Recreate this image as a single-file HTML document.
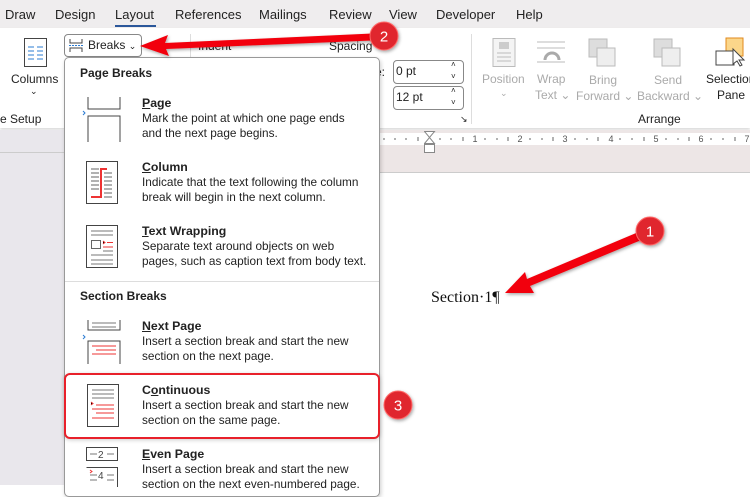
<!DOCTYPE html>
<html><head><meta charset="utf-8"><style>
*{margin:0;padding:0;box-sizing:border-box}
body{width:750px;height:485px;overflow:hidden;position:relative;font-family:"Liberation Sans",sans-serif;background:#fff;color:#222}
.a{position:absolute;white-space:nowrap}
.tab{font-size:13px;top:7px}
.r{font-size:12px}
.g{color:#aaa}
.m{font-size:11.8px;line-height:15px}
.t{font-weight:bold;font-size:12px}
</style></head><body>
<div class="a" style="left:0;top:0;width:750px;height:28px;background:#efedee"></div>
<div class="a tab" style="left:5px">Draw</div>
<div class="a tab" style="left:55px">Design</div>
<div class="a tab" style="left:115px">Layout</div>
<div class="a" style="left:115px;top:25px;width:41px;height:2px;background:#2b579a"></div>
<div class="a tab" style="left:175px">References</div>
<div class="a tab" style="left:259px">Mailings</div>
<div class="a tab" style="left:329px">Review</div>
<div class="a tab" style="left:389px">View</div>
<div class="a tab" style="left:436px">Developer</div>
<div class="a tab" style="left:516px">Help</div>
<!-- ribbon -->
<div class="a" style="left:0;top:28px;width:750px;height:100px;background:#fff;box-shadow:0 2px 3px rgba(0,0,0,.15)"></div>
<svg class="a" style="left:24px;top:38px" width="24" height="30"><rect x="0.5" y="0.5" width="22" height="28" fill="#fff" stroke="#444"/><g stroke="#2b7cd3"><path d="M4 9h6M13 9h6M4 13h6M13 13h6M4 17h6M13 17h6M4 21h6M13 21h6"/></g></svg>
<div class="a r" style="left:11px;top:72px">Columns</div>
<div class="a r" style="left:30px;top:86px;font-size:9px">⌄</div>
<div class="a r" style="left:0;top:112px">e Setup</div>
<div class="a" style="left:64px;top:34px;width:78px;height:23px;border:1px solid #888;border-radius:4px"></div>
<svg class="a" style="left:68px;top:38px" width="16" height="15"><path d="M2 1v4h12V1M2 14v-4h12v4" fill="none" stroke="#444"/><path d="M1 7.5h14" stroke="#2b7cd3" stroke-dasharray="2 1"/></svg>
<div class="a r" style="left:88px;top:38px">Breaks <span style="font-size:9px">⌄</span></div>
<div class="a" style="left:190px;top:34px;width:1px;height:90px;background:#ddd"></div>
<div class="a r" style="left:198px;top:39px">Indent</div>
<div class="a r" style="left:329px;top:39px">Spacing</div>
<div class="a r" style="left:375px;top:65px">e:</div>
<div class="a" style="left:393px;top:60px;width:71px;height:24px;border:1px solid #888;border-radius:4px"></div>
<div class="a r" style="left:396px;top:64px">0 pt</div>
<div class="a" style="left:393px;top:86px;width:71px;height:24px;border:1px solid #888;border-radius:4px"></div>
<div class="a r" style="left:396px;top:90px">12 pt</div>
<div class="a" style="left:451px;top:59px;font-size:8px;line-height:12px">˄<br>˅</div>
<div class="a" style="left:451px;top:85px;font-size:8px;line-height:12px">˄<br>˅</div>
<div class="a" style="left:460px;top:114px;font-size:9px">↘</div>
<div class="a" style="left:471px;top:34px;width:1px;height:90px;background:#ddd"></div>
<svg class="a" style="left:492px;top:38px" width="26" height="30"><rect x="1" y="0.5" width="22" height="28" fill="#f4f4f4" stroke="#bbb"/><rect x="7" y="4" width="10" height="7" fill="#ccc"/><path d="M5 15h14M5 19h14M5 23h14" stroke="#bbb"/></svg>
<div class="a r g" style="left:482px;top:72px">Position</div>
<div class="a g" style="left:500px;top:88px;font-size:9px">⌄</div>
<svg class="a" style="left:537px;top:40px" width="30" height="24"><path d="M0 2h28M0 8h28M0 22h28" stroke="#bbb"/><path d="M8 20a7 7 0 0 1 14 0" fill="none" stroke="#aaa" stroke-width="3"/></svg>
<div class="a r g" style="left:537px;top:72px">Wrap</div>
<div class="a r g" style="left:535px;top:88px">Text ⌄</div>
<svg class="a" style="left:588px;top:38px" width="30" height="30"><rect x="1" y="1" width="18" height="18" fill="#ddd" stroke="#bbb"/><rect x="9" y="10" width="18" height="18" fill="#eee" stroke="#bbb"/></svg>
<div class="a r g" style="left:589px;top:73px">Bring</div>
<div class="a r g" style="left:576px;top:89px">Forward ⌄</div>
<svg class="a" style="left:653px;top:38px" width="30" height="30"><rect x="1" y="1" width="18" height="18" fill="#ddd" stroke="#bbb"/><rect x="9" y="10" width="18" height="18" fill="#eee" stroke="#bbb"/></svg>
<div class="a r g" style="left:654px;top:73px">Send</div>
<div class="a r g" style="left:637px;top:89px">Backward ⌄</div>
<svg class="a" style="left:713px;top:37px" width="37" height="30"><rect x="13" y="1" width="17" height="18" fill="#fbd68a" stroke="#e08a1e"/><rect x="3" y="14" width="18" height="14" fill="#fff" stroke="#444"/><path d="M20 12v15l4-3 3 5 2-1-3-5h5z" fill="#fff" stroke="#444"/></svg>
<div class="a r" style="left:706px;top:72px">Selection</div>
<div class="a r" style="left:717px;top:88px">Pane</div>
<div class="a r" style="left:638px;top:112px">Arrange</div>
<!-- below ribbon -->
<div class="a" style="left:0;top:130px;width:379px;height:355px;background:#e9e7ec"></div>
<div class="a" style="left:0;top:152px;width:379px;height:1px;background:#ccc"></div>
<div class="a" style="left:379px;top:130px;width:371px;height:43px;background:#ede6e6;border-bottom:1px solid #ccc"></div>
<div class="a" style="left:379px;top:133px;width:371px;height:12px;background:#fff"></div>
<div class="a" style="left:378px;top:128px;width:1px;height:357px;background:#777"></div>
<svg class="a" style="left:379px;top:133px" width="371" height="12">
<g stroke="#666"><path d="M5 5v2M16 5v2M27 5v2M39 4v4M61 5v2M72 5v2M84 4v4M106 5v2M118 5v2M129 4v4M151 5v2M163 5v2M174 4v4M196 5v2M208 5v2M219 4v4M241 5v2M253 5v2M265 4v4M287 5v2M299 5v2M310 4v4M332 5v2M344 5v2M356 4v4"/></g>
<g font-size="9" fill="#555" font-family="Liberation Sans" text-anchor="middle"><text x="96" y="9">1</text><text x="141" y="9">2</text><text x="186" y="9">3</text><text x="232" y="9">4</text><text x="277" y="9">5</text><text x="322" y="9">6</text><text x="368" y="9">7</text></g></svg>
<svg class="a" style="left:424px;top:131px" width="12" height="22"><path d="M0.5 0.5h10l-5 6zM0.5 12.5l5-6 5 6zM0.5 13.5h10v8h-10z" fill="#fff" stroke="#888"/></svg>
<div class="a" style="left:431px;top:289px;font-family:'Liberation Serif',serif;font-size:16px;color:#111">Section·1¶</div>
<!-- menu -->
<div class="a" style="left:64px;top:57px;width:316px;height:440px;background:#fff;border:1px solid #999;border-radius:5px;box-shadow:1px 2px 4px rgba(0,0,0,.2)"></div>
<div class="a t" style="left:80px;top:66px">Page Breaks</div>
<svg class="a" style="left:82px;top:97px" width="40" height="45"><path d="M6 0v12h32V0M6 45V19h32v26" fill="#fff" stroke="#444"/><path d="M1 14l2 2-2 2" fill="none" stroke="#2b7cd3"/></svg>
<div class="a m" style="left:142px;top:96px"><b style="font-size:12.3px"><u>P</u>age</b><br>Mark the point at which one page ends<br>and the next page begins.</div>
<svg class="a" style="left:86px;top:161px" width="34" height="44"><rect x="0.5" y="0.5" width="31" height="42" fill="#fff" stroke="#444"/><path d="M5 8h8M5 12h8M5 16h8M5 20h8M5 24h8M5 28h8M18 12h8M18 16h8M18 20h8M18 24h8M18 28h8M18 32h8M18 36h8" stroke="#666"/><path d="M5 36h10V8h6" fill="none" stroke="#e33" stroke-width="2"/></svg>
<div class="a m" style="left:142px;top:160px"><b style="font-size:12.3px"><u>C</u>olumn</b><br>Indicate that the text following the column<br>break will begin in the next column.</div>
<svg class="a" style="left:86px;top:225px" width="34" height="44"><rect x="0.5" y="0.5" width="31" height="42" fill="#fff" stroke="#444"/><path d="M5 6h22M5 10h22M5 35h22M5 39h22M17 26h10M5 30h22" stroke="#777"/><rect x="5.5" y="15.5" width="9" height="8" fill="none" stroke="#666"/><path d="M17 16l2 1.5-2 1.5M21 17.5h6M17 22h10" stroke="#e33"/></svg>
<div class="a m" style="left:142px;top:224px"><b style="font-size:12.3px"><u>T</u>ext Wrapping</b><br>Separate text around objects on web<br>pages, such as caption text from body text.</div>
<div class="a" style="left:65px;top:281px;width:314px;height:1px;background:#ddd"></div>
<div class="a t" style="left:80px;top:289px">Section Breaks</div>
<svg class="a" style="left:82px;top:320px" width="40" height="44"><path d="M6 0v10h32V0M6 44V21h32v23" fill="#fff" stroke="#444"/><path d="M10 3h24M10 7h24" stroke="#777"/><path d="M10 26h24M14 30h20M10 34h24" stroke="#e33"/><path d="M1 15l2 2-2 2" fill="none" stroke="#2b7cd3"/></svg>
<div class="a m" style="left:142px;top:319px"><b style="font-size:12.3px"><u>N</u>ext Page</b><br>Insert a section break and start the new<br>section on the next page.</div>
<div class="a" style="left:64px;top:373px;width:316px;height:66px;border:2px solid #e8202a;border-radius:6px;box-shadow:0 1px 4px rgba(0,0,0,.2)"></div>
<svg class="a" style="left:87px;top:384px" width="34" height="44"><rect x="0.5" y="0.5" width="31" height="42" fill="#fff" stroke="#444"/><path d="M5 6h22M5 10h22M5 14h22" stroke="#777"/><path d="M4 18l2 1.5-2 1.5M9 21h18M5 25h22M9 29h18M5 34h22" stroke="#e33"/></svg>
<div class="a m" style="left:142px;top:383px"><b style="font-size:12.3px">C<u>o</u>ntinuous</b><br>Insert a section break and start the new<br>section on the same page.</div>
<svg class="a" style="left:86px;top:447px" width="34" height="40"><path d="M0.5 0.5h31v13h-31zM0.5 20.5h31v20" fill="#fff" stroke="#444"/><path d="M4 7h7M21 7h7M4 28h7M21 28h7M21 33h7M4 33h7" stroke="#777"/><text x="12" y="11" font-size="10" fill="#444" font-family="Liberation Sans">2</text><text x="12" y="32" font-size="10" fill="#444" font-family="Liberation Sans">4</text><path d="M4 23l2 1.5-2 1.5" stroke="#e33" fill="none"/></svg>
<div class="a m" style="left:142px;top:447px"><b style="font-size:12.3px"><u>E</u>ven Page</b><br>Insert a section break and start the new<br>section on the next even-numbered page.</div>
<!-- annotations -->
<svg class="a" style="left:0;top:0" width="750" height="485">
<defs><filter id="s" x="-50%" y="-50%" width="200%" height="200%"><feDropShadow dx="1" dy="1.5" stdDeviation="1.5" flood-opacity=".35"/></filter></defs>
<g fill="#f2050a" filter="url(#s)">
<path d="M383 33 L165 43 L168 35 L140 46 L169 56 L166 49 L384 40z"/>
<path d="M648 228 L527 279 L525 272 L505 293 L534 293 L530 286 L651 236z"/>
</g>
<g filter="url(#s)" font-family="Liberation Sans" font-size="15" fill="#fff" text-anchor="middle">
<circle cx="384" cy="36" r="14" fill="#e0282e" stroke="#f66" stroke-width="1"/><text x="384" y="41.5">2</text>
<circle cx="650" cy="231" r="14" fill="#e0282e" stroke="#f66" stroke-width="1"/><text x="650" y="236.5">1</text>
<circle cx="398" cy="405" r="14" fill="#e0282e" stroke="#f66" stroke-width="1"/><text x="398" y="410.5">3</text>
</g>
</svg>
</body></html>
